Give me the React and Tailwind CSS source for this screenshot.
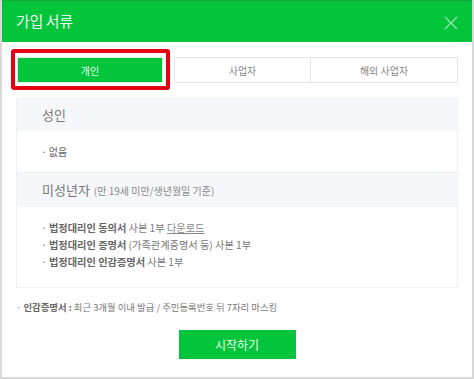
const tabs = ['개인', '사업자', '해외 사업자'];

export default function App() {
  return (
    <div
      className="w-[474px] h-[379px] overflow-hidden bg-white border-x-2 border-b-2 border-[#d9d9d9] flex flex-col"
      style={{ fontFamily: '"Noto Sans CJK KR", "Noto Sans", sans-serif' }}
    >
      <div className="h-[42px] shrink-0 bg-[#03c53b] border-t border-[#15a83f] flex items-center justify-between pl-[14px] pr-[14px]">
        <h1 className="text-[15px] text-[#eafbee] tracking-tight">가입 서류</h1>
        <svg width="14" height="14" viewBox="0 0 14 14" className="mt-[2px]">
          <path d="M1 1L13 13M13 1L1 13" stroke="#8fe6a8" strokeWidth="1.4" />
        </svg>
      </div>

      <div className="px-[14px] pt-[15px]">
        <div className="flex h-[26px]">
          <div className="relative ml-[1px] w-[146px] shrink-0">
            <div className="absolute -left-[6px] -right-[7px] -top-[8px] -bottom-[7px] rounded-[3px] border-[4px] border-[#e60012]" />
            <div className="h-full bg-[#03c53b] border border-[#e8e8e8] flex items-center justify-center text-[10px] text-[#e9fbee]">
              {tabs[0]}
            </div>
          </div>
          <div className="w-[137px] ml-[11px] border border-[#e5e5e5] flex items-center justify-center text-[10px] text-[#888]">
            {tabs[1]}
          </div>
          <div className="flex-1 border border-l-0 border-[#e5e5e5] flex items-center justify-center text-[10px] text-[#888]">
            {tabs[2]}
          </div>
        </div>

        <div className="mt-[15px] border border-[#eef0f4] text-[#666]">
          <div className="h-[32px] bg-[#f6f7fa] flex items-center pl-[25px] text-[13px] text-[#777]">성인</div>
          <div className="h-[42px] flex items-center pl-[24px] text-[10px] border-b border-[#eef0f4]">· 없음</div>
          <div className="h-[34px] bg-[#f6f7fa] flex items-center pl-[25px] text-[13px] text-[#777]">
            미성년자
            <span className="ml-[4px] text-[10px] text-[#888]">(만 19세 미만/생년월일 기준)</span>
          </div>
          <ul className="pl-[24px] pt-[12px] pb-[17px] text-[10.2px] leading-[17px] text-[#777]">
            <li>
              · <b className="font-bold text-[#666]">법정대리인 동의서</b> 사본 1부{' '}
              <span className="underline text-[#888]">다운로드</span>
            </li>
            <li>
              · <b className="font-bold text-[#666]">법정대리인 증명서</b> (가족관계증명서 등) 사본 1부
            </li>
            <li>
              · <b className="font-bold text-[#666]">법정대리인 인감증명서</b> 사본 1부
            </li>
          </ul>
        </div>

        <p className="mt-[12px] text-[9.4px] text-[#777]">
          · <b className="font-bold text-[#666]">인감증명서 :</b> 최근 3개월 이내 발급 / 주민등록번호 뒤 7자리 마스킹
        </p>

        <div className="flex justify-center mt-[16px]">
          <button className="w-[117px] h-[29px] bg-[#03c53b] text-[12px] text-[#e9fbee]">시작하기</button>
        </div>
      </div>
    </div>
  );
}
